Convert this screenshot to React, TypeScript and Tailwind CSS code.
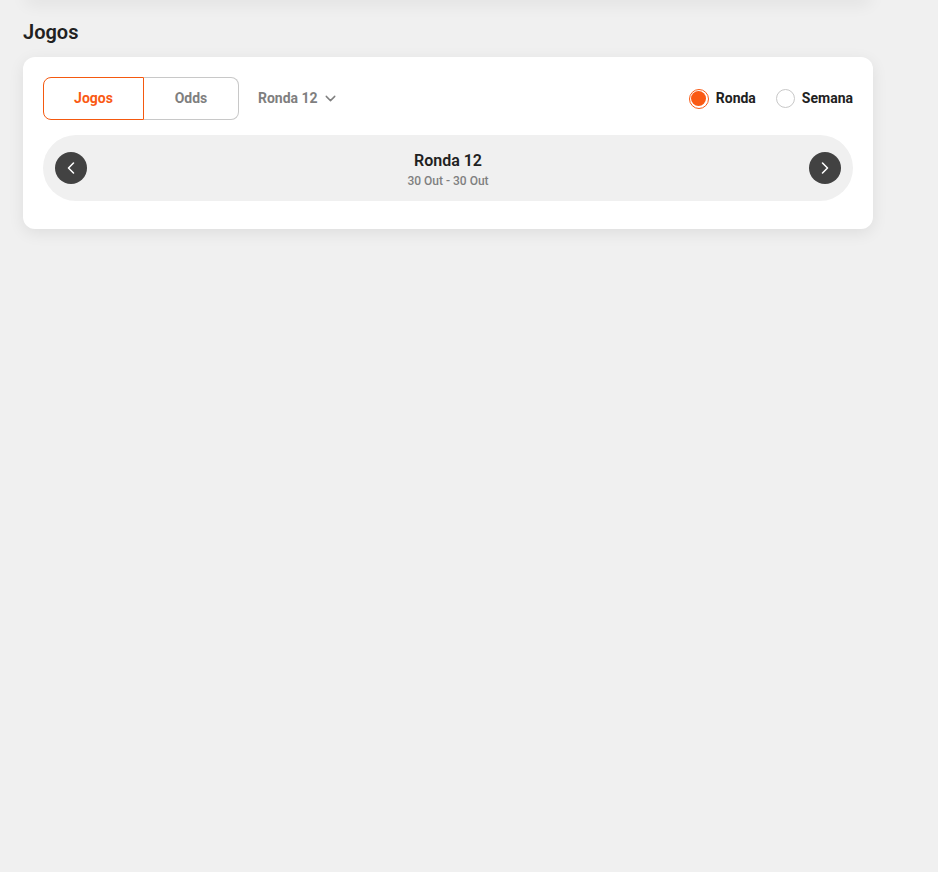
import React, { useState } from 'react';
import { ChevronDown, ChevronLeft, ChevronRight } from 'lucide-react';

const App: React.FC = () => {
    const [mode, setMode] = useState<'ronda' | 'semana'>('ronda');
    const [tab, setTab] = useState<'jogos' | 'odds'>('jogos');

    return (
        <div className="min-h-[872px] bg-[#f0f0f0] pl-[23px] font-['Roboto',sans-serif] text-[#212121] overflow-hidden">
            {/* previous card, scrolled out of view */}
            <div className="w-[850px] h-[10px] -mt-[10px] bg-white rounded-b-xl shadow-[0_4px_16px_rgba(0,0,0,0.08)]" />

            <h2 className="mt-[22px] h-[20px] text-[20px] leading-[20px] font-semibold">Jogos</h2>

            <div className="mt-[15px] w-[850px] h-[172px] bg-white rounded-xl shadow-[0_4px_16px_rgba(0,0,0,0.08)] px-5 pt-5">
                <div className="flex items-center justify-between h-[43px]">
                    <div className="flex items-center">
                        <div className="flex h-[43px]">
                            <button
                                onClick={() => setTab('jogos')}
                                className="w-[101px] rounded-l-lg border border-[#f4590f] text-[14px] font-bold text-[#fa5a14]"
                            >
                                Jogos
                            </button>
                            <button
                                onClick={() => setTab('odds')}
                                className="w-[95px] rounded-r-lg border border-l-0 border-[#c8c8c8] text-[14px] font-bold text-[#7f7f7f]"
                            >
                                Odds
                            </button>
                        </div>
                        <button className="ml-[19px] flex items-center gap-[4px] text-[14px] font-bold text-[#7f7f7f]">
                            Ronda 12
                            <ChevronDown size={17} strokeWidth={2} />
                        </button>
                    </div>

                    <div className="flex items-center gap-5">
                        <button onClick={() => setMode('ronda')} className="flex items-center gap-[7px] text-[14px] font-bold">
                            <span className="flex items-center justify-center w-5 h-5 rounded-full border border-[#fa5a14]">
                                {mode === 'ronda' && <span className="w-[15px] h-[15px] rounded-full bg-[#fa5a14]" />}
                            </span>
                            Ronda
                        </button>
                        <button onClick={() => setMode('semana')} className="flex items-center gap-[7px] text-[14px] font-bold">
                            <span className="flex items-center justify-center w-[19px] h-[19px] rounded-full border border-[#c8c8c8]">
                                {mode === 'semana' && <span className="w-[15px] h-[15px] rounded-full bg-[#fa5a14]" />}
                            </span>
                            Semana
                        </button>
                    </div>
                </div>

                <div className="mt-[15px] h-[66px] rounded-[33px] bg-[#f0f0f0] px-3 flex items-center justify-between">
                    <button className="w-8 h-8 rounded-full bg-[#424242] text-white flex items-center justify-center">
                        <ChevronLeft size={20} strokeWidth={1.9} />
                    </button>
                    <div className="text-center pt-[2px]">
                        <div className="text-[16px] leading-[20px] font-semibold">Ronda 12</div>
                        <div className="mt-[3px] text-[12px] leading-[14px] font-medium text-[#7f7f7f]">30 Out - 30 Out</div>
                    </div>
                    <button className="w-8 h-8 rounded-full bg-[#424242] text-white flex items-center justify-center">
                        <ChevronRight size={20} strokeWidth={1.9} />
                    </button>
                </div>
            </div>
        </div>
    );
};

export default App;
